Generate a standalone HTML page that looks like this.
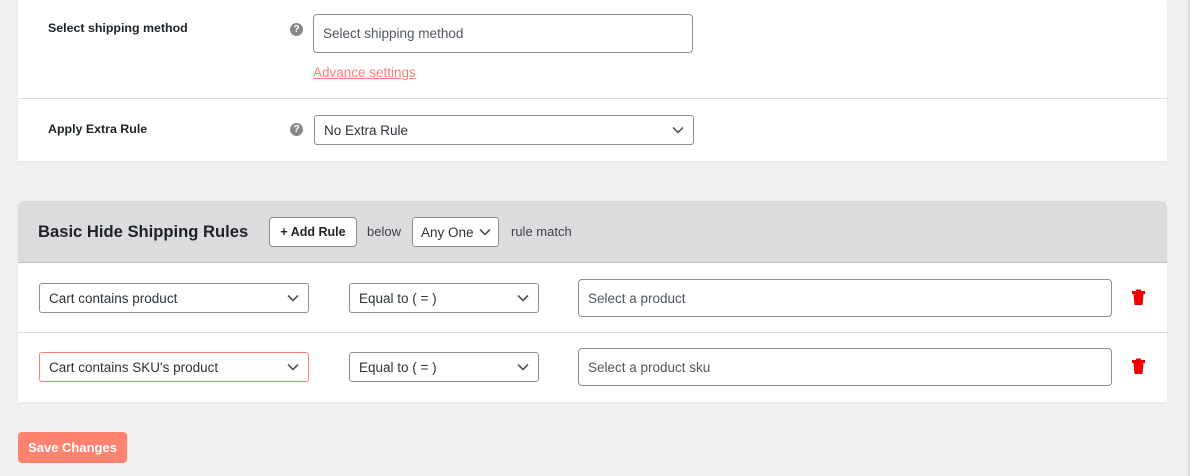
<!DOCTYPE html>
<html><head><style>
*{box-sizing:border-box;margin:0;padding:0}
body{width:1190px;height:476px;background:#f0f0f1;font-family:"Liberation Sans",sans-serif;font-size:13px;color:#1d2327;position:relative;overflow:hidden}
.a{position:absolute}
.panel{background:#fff;box-shadow:0 1px 2px rgba(0,0,0,.05)}
.lbl{font-size:12.4px;font-weight:bold;color:#1d2327}
.q{width:13px;height:13px;border-radius:50%;background:#888;color:#fff;font-size:10px;font-weight:bold;text-align:center;line-height:13px}
.in{border:1px solid #8c8f94;border-radius:4px;background:#fff;color:#50575e;font-size:13.5px;padding-left:9px;display:flex;align-items:center}
.sel{border:1px solid #8c8f94;border-radius:3px;background:#fff;color:#2c3338;font-size:13.5px;padding-left:9px;display:flex;align-items:center}
.chev{position:absolute;right:9px;top:50%;margin-top:-4px}
.trash{width:13px;height:16px}
</style></head><body>
<div class="a" style="left:1188px;top:0;width:2px;height:476px;background:#dcdcde"></div>
<div class="a panel" style="left:18px;top:0;width:1149px;height:161px"></div>
<div class="a" style="left:18px;top:98px;width:1149px;height:1px;background:#dcdcde"></div>
<div class="a lbl" style="left:48px;top:21px">Select shipping method</div>
<div class="a q" style="left:290px;top:23px">?</div>
<div class="a in" style="left:313px;top:14px;width:380px;height:39px">Select shipping method</div>
<div class="a" style="left:313px;top:65px;color:#fa8072;font-size:13.5px;text-decoration:underline">Advance settings</div>
<div class="a lbl" style="left:48px;top:122px">Apply Extra Rule</div>
<div class="a q" style="left:290px;top:123px">?</div>
<div class="a sel" style="left:314px;top:115px;width:380px;height:30px">No Extra Rule<svg class="chev" width="12" height="8" viewBox="0 0 12 8"><path d="M1 1.5l5 5 5-5" stroke="#50575e" stroke-width="1.6" fill="none"/></svg></div>

<div class="a panel" style="left:18px;top:201px;width:1149px;height:201px;border-radius:6px 6px 0 0"></div>
<div class="a" style="left:18px;top:201px;width:1149px;height:62px;background:#dcdcde;border-radius:6px 6px 0 0;border-bottom:1px solid #c3c4c7"></div>
<div class="a" style="left:38px;top:222px;font-size:16.6px;font-weight:bold;color:#1d2327">Basic Hide Shipping Rules</div>
<div class="a" style="left:269px;top:217px;width:88px;height:30px;border:1px solid #8c8f94;border-radius:4px;background:#fff;font-size:12.5px;font-weight:bold;text-align:center;line-height:28px">+ Add Rule</div>
<div class="a" style="left:367px;top:224px;font-size:13px;color:#3c434a">below</div>
<div class="a sel" style="left:412px;top:217px;width:87px;height:30px;padding-left:8px">Any One<svg class="chev" width="12" height="8" viewBox="0 0 12 8" style="right:7px"><path d="M1 1.5l5 5 5-5" stroke="#50575e" stroke-width="1.6" fill="none"/></svg></div>
<div class="a" style="left:511px;top:224px;font-size:13px;color:#3c434a">rule match</div>

<div class="a sel" style="left:39px;top:283px;width:270px;height:30px">Cart contains product<svg class="chev" width="12" height="8" viewBox="0 0 12 8"><path d="M1 1.5l5 5 5-5" stroke="#50575e" stroke-width="1.6" fill="none"/></svg></div>
<div class="a sel" style="left:349px;top:283px;width:190px;height:30px">Equal to ( = )<svg class="chev" width="12" height="8" viewBox="0 0 12 8"><path d="M1 1.5l5 5 5-5" stroke="#50575e" stroke-width="1.6" fill="none"/></svg></div>
<div class="a in" style="left:578px;top:279px;width:534px;height:38px">Select a product</div>
<svg class="a trash" style="left:1132px;top:289px" viewBox="0 0 13 16"><path d="M4.5 2V1h4v1M0 2.5h13v2H0z" fill="#e00" stroke="#e00" stroke-width="1"/><path d="M1.5 5h10l-1 11h-8z" fill="#e00"/></svg>
<div class="a" style="left:18px;top:332px;width:1149px;height:1px;background:#dcdcde"></div>
<div class="a sel" style="left:39px;top:352px;width:270px;height:30px;border-color:#fa8072">Cart contains SKU's product<svg class="chev" width="12" height="8" viewBox="0 0 12 8"><path d="M1 1.5l5 5 5-5" stroke="#50575e" stroke-width="1.6" fill="none"/></svg></div>
<div class="a sel" style="left:349px;top:352px;width:190px;height:30px">Equal to ( = )<svg class="chev" width="12" height="8" viewBox="0 0 12 8"><path d="M1 1.5l5 5 5-5" stroke="#50575e" stroke-width="1.6" fill="none"/></svg></div>
<div class="a in" style="left:578px;top:348px;width:534px;height:38px">Select a product sku</div>
<svg class="a trash" style="left:1132px;top:358px" viewBox="0 0 13 16"><path d="M4.5 2V1h4v1M0 2.5h13v2H0z" fill="#e00" stroke="#e00" stroke-width="1"/><path d="M1.5 5h10l-1 11h-8z" fill="#e00"/></svg>

<div class="a" style="left:18px;top:432px;width:109px;height:31px;background:#ff826e;border-radius:4px;color:#fff;font-weight:bold;font-size:13px;text-align:center;line-height:31px">Save Changes</div>
</body></html>
